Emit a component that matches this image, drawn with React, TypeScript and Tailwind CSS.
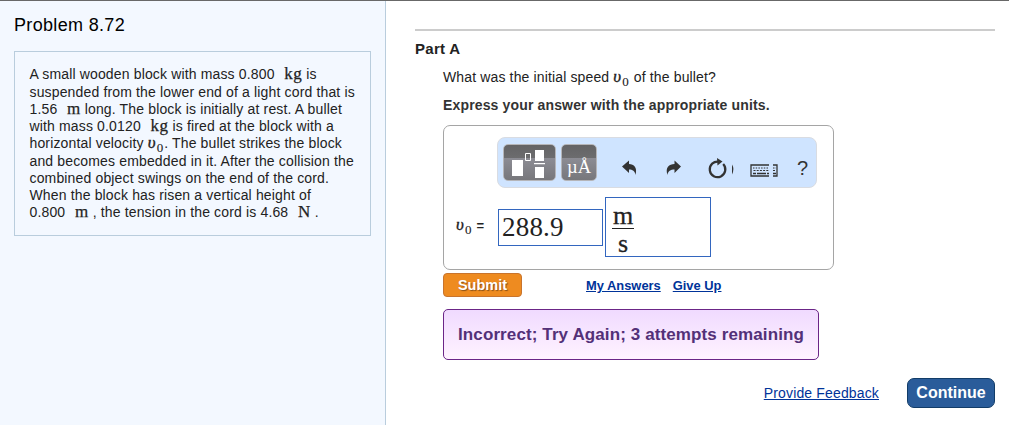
import React from "react";

function Unit({ children }: { children: React.ReactNode }) {
  return (
    <span className="ml-[1.500px] font-['Liberation_Serif',serif] text-[17px] leading-none tracking-[0.5px] text-[#222] [-webkit-text-stroke:0.25px_#222]">
      {children}
    </span>
  );
}

function Velocity() {
  return (
    <span className="inline-flex items-baseline font-['Liberation_Serif',serif] leading-none tracking-normal text-[#222] [-webkit-text-stroke:0.35px_#222]">
      <span className="w-[9px] text-[17px] italic leading-none">υ</span>
      <span className="relative top-[4px] h-[12px] text-[13px] leading-[12px] [-webkit-text-stroke:0.1px_#222]">0</span>
    </span>
  );
}

function Line({ className, children }: { className: string; children: React.ReactNode }) {
  return <div className={`flex items-baseline whitespace-pre ${className}`}>{children}</div>;
}

function ProblemPanel() {
  return (
    <aside className="w-[386px] shrink-0 border-r border-[#b9cddd] bg-[#f3f8ff] pl-[14px] pr-[14px]">
      <h1 className="pt-[13px] text-[18px] leading-[22px] tracking-[0.33px] text-black">Problem 8.72</h1>
      <div className="mt-[15px] h-[185px] w-[357px] border border-[#b9cddd] pl-[14.500px] pt-[13px] text-[14px] leading-[17px] tracking-[0.15px] text-[#222]">
        <Line className="h-[18px]">
          <span>A small wooden block with mass 0.800{"  "}</span><Unit>kg</Unit><span> is</span>
        </Line>
        <Line className="h-[17px]"><span className="leading-[19px]">suspended from the lower end of a light cord that is</span></Line>
        <Line className="h-[17px]">
          <span>1.56{"  "}</span><Unit>m</Unit><span> long. The block is initially at rest. A bullet</span>
        </Line>
        <Line className="h-[17px]">
          <span>with mass 0.0120{"  "}</span><Unit>kg</Unit><span> is fired at the block with a</span>
        </Line>
        <Line className="h-[18px]">
          <span>horizontal velocity </span><Velocity /><span className="ml-[1px]">. The bullet strikes the block</span>
        </Line>
        <Line className="h-[17px]"><span className="leading-[19px]">and becomes embedded in it. After the collision the</span></Line>
        <Line className="h-[17px]"><span className="leading-[19px]">combined object swings on the end of the cord.</span></Line>
        <Line className="h-[17px]"><span className="leading-[19px]">When the block has risen a vertical height of</span></Line>
        <Line className="h-[17px]">
          <span>0.800{"  "}</span><Unit>m</Unit><span> , the tension in the cord is 4.68{"  "}</span><Unit>N</Unit><span> .</span>
        </Line>
      </div>
    </aside>
  );
}

const toolButton =
  "h-[37px] rounded-[5px] border border-[#b5b5b8] bg-[linear-gradient(#636365_0%,#6c6c6e_36%,#8c8c94_37%,#77777b_100%)]";

function Toolbar() {
  return (
    <div className="ml-[53px] mt-[11px] flex h-[51px] w-[320px] rounded-[8px] border border-[#d9dce2] bg-[#cfe4ff] pl-[5px] pt-[6px]">
      <button className={`${toolButton} w-[53px]`} aria-label="Templates">
        <svg width="51" height="35" viewBox="0 0 51 35" fill="#fff">
          <path d="M8 15h11v16H8zM31 5h9v11h-9zM31 22h9v11h-9zM30 18h11v1.200H30z" />
          <path d="M21.500 8.500h5v7h-5z" fill="none" stroke="#fff" />
        </svg>
      </button>
      <button className={`${toolButton} ml-[5px] w-[36px] pt-[8px] text-center font-['Liberation_Serif',serif] text-[18.500px] leading-[26px] text-white`}>
        µÅ
      </button>
      <svg className="ml-[24px] mt-[15px]" width="17" height="17" viewBox="0 0 17 17" aria-label="Undo">
        <path d="M1 7.500 8 1.500V5c5 0 8.500 3.500 6.500 11C14 12 11.500 10.500 8 10.500V14Z" fill="#333" />
      </svg>
      <svg className="ml-[27px] mt-[15px]" width="17" height="17" viewBox="0 0 17 17" aria-label="Redo">
        <path d="M16 7.500 9.500 1.500V5C4 5 0 8.500 2.500 16 3 12 5.500 10.500 9.500 10.500V14Z" fill="#333" />
      </svg>
      <svg className="ml-[25px] mt-[14px]" width="28" height="24" viewBox="0 0 28 24" aria-label="Reset">
        <path d="M12 3.700A7.800 7.800 0 1 0 16.200 6" fill="none" stroke="#333" strokeWidth="2.200" />
        <path d="m10 0 5.500 3.500-5 4Z" fill="#333" />
        <path d="M25 6.500q2.800 4.500 0 10Z" fill="#333" />
      </svg>
      <svg className="ml-[15px] mt-[19px]" width="29" height="15" viewBox="0 0 29 15" fill="none" stroke="#333" aria-label="Keyboard">
        <path d="M19 2H1v11h18M23 2h4v11h-4" strokeWidth="1.300" />
        <path d="M3 5h16M23 5h3" strokeDasharray="1.500 1.200" />
        <path d="M3.500 7.500h15M23 7.500h3" strokeDasharray="2 1.200" />
        <path d="M3 10.500h3M7 10.500h9M17 10.500h2M23 10.500h3" strokeWidth="1.300" />
      </svg>
      <span className="ml-[18px] mt-[12px] text-[20px] leading-[24px] text-[#333]">?</span>
    </div>
  );
}

function AnswerBox() {
  return (
    <div className="mt-[10px] h-[145px] w-[391px] rounded-[7px] border border-[#a5a5a5]">
      <Toolbar />
      <div className="mt-[9px] flex">
        <div className="ml-[12px] flex w-[42px] items-baseline whitespace-pre pt-[19px] text-[13px] font-bold leading-[20px] text-[#222]">
          <span className="font-normal"><Velocity /></span><span className="ml-[5px]">=</span>
        </div>
        <div className="mt-[12px] h-[37px] w-[105px] border border-[#3366bf] pl-[3px] font-['Liberation_Serif',serif] text-[27px] leading-[35px] tracking-[0.2px] text-[#222]">
          288.9
        </div>
        <div className="ml-[2px] flex h-[60px] w-[106px] border border-[#3366bf] pl-[6px] font-['Liberation_Serif',serif] text-[26px] text-[#222] [-webkit-text-stroke:0.3px_#222]">
          <div className="flex w-[22px] flex-col items-center">
            <span className="h-[30px] shrink-0 pt-[5px] leading-[26px]">m</span>
            <span className="h-px w-full shrink-0 bg-[#222]" />
            <span className="h-[27px] shrink-0 leading-[29px]">s</span>
          </div>
        </div>
      </div>
    </div>
  );
}

export default function App() {
  return (
    <div className="flex h-[425px] w-[1009px] overflow-hidden border-t border-[#686868] bg-white font-['Liberation_Sans',Arial,sans-serif]">
      <ProblemPanel />
      <main className="flex-1 pl-[29px] pr-[14px] pt-[28px]">
        <hr className="h-[2px] border-0 bg-[#ccc]" />
        <h2 className="mt-[8px] text-[15px] font-bold leading-[20px] tracking-[0.3px] text-[#222]">Part A</h2>
        <div className="pl-[28px]">
          <div className="mt-[8px] flex h-[20px] items-baseline whitespace-pre text-[14px] leading-[20px] tracking-[0.14px] text-[#222]">
            <span>What was the initial speed </span><Velocity /><span className="ml-[1px]"> of the bullet?</span>
          </div>
          <p className="mt-[8px] text-[14px] font-bold leading-[20px] tracking-[0.15px] text-[#333]">
            Express your answer with the appropriate units.
          </p>
          <AnswerBox />
          <div className="mt-[3px] flex h-[25px]">
            <button className="h-[24px] w-[79px] rounded-[4px] border border-[#c8742d] bg-[#ee8b20] text-[14.500px] font-bold leading-[21px] text-white [text-shadow:1px_1px_1px_#875018]">
              Submit
            </button>
            <a className="ml-[64px] pt-[3px] text-[12.900px] font-bold leading-[20px] text-[#039] underline">My Answers</a>
            <a className="ml-[12px] pt-[3px] text-[12.900px] font-bold leading-[20px] text-[#039] underline">Give Up</a>
          </div>
          <div className="mt-[11px] h-[51px] w-[376px] whitespace-nowrap rounded-[5px] border border-[#6b2587] bg-linear-to-b from-[#f0daff] to-[#fff3ff] pl-[14px] text-[17px] font-bold leading-[49px] tracking-[0.11px] text-[#533078]">
            Incorrect; Try Again; 3 attempts remaining
          </div>
        </div>
        <div className="mt-[18px] flex justify-end">
          <a className="mr-[28px] pt-[5px] text-[14px] leading-[20px] tracking-[0.15px] text-[#039] underline">Provide Feedback</a>
          <button className="h-[30px] w-[88px] rounded-[7px] border border-[#123c68] bg-[#2a5c9a] text-[16px] font-bold leading-[26px] text-white">
            Continue
          </button>
        </div>
      </main>
    </div>
  );
}
